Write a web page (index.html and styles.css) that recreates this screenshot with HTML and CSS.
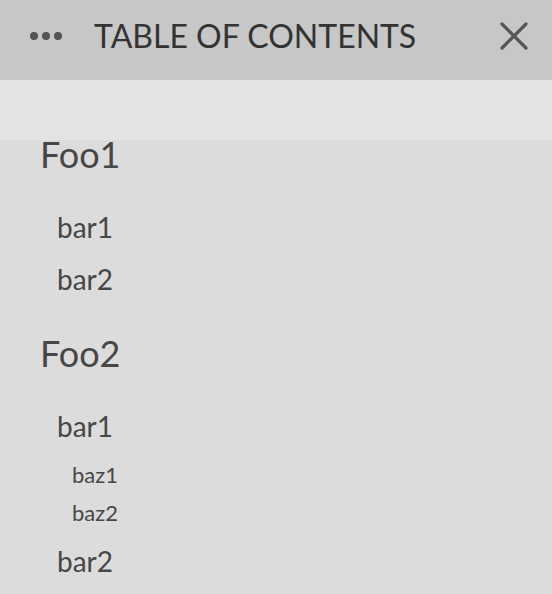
FILE: index.html
```html
<!DOCTYPE html>
<html lang="en">
<head>
    <meta charset="UTF-8">
    <meta name="viewport" content="width=device-width, initial-scale=1.0">
    <title>Table of Contents</title>
    <link rel="stylesheet" href="styles.css">
</head>
<body>
    <header class="toc-header">
        <button class="menu-button" aria-label="More">
            <span class="dot"></span><span class="dot"></span><span class="dot"></span>
        </button>
        <h1>TABLE OF CONTENTS</h1>
        <button class="close-button" aria-label="Close">
            <svg width="28" height="28" viewBox="0 0 28 28">
                <path d="M2 2 L26 26 M26 2 L2 26" stroke="#555" stroke-width="3.2" stroke-linecap="round" fill="none"/>
            </svg>
        </button>
    </header>

    <div class="toc-spacer"></div>

    <nav class="toc">
        <ul class="toc-list">
            <li>
                <a class="toc-h1" href="#">Foo1</a>
                <ul class="toc-sub">
                    <li><a class="toc-h2" href="#">bar1</a></li>
                    <li><a class="toc-h2" href="#">bar2</a></li>
                </ul>
            </li>
            <li>
                <a class="toc-h1" href="#">Foo2</a>
                <ul class="toc-sub">
                    <li>
                        <a class="toc-h2" href="#">bar1</a>
                        <ul class="toc-subsub">
                            <li><a class="toc-h3" href="#">baz1</a></li>
                            <li><a class="toc-h3" href="#">baz2</a></li>
                        </ul>
                    </li>
                    <li><a class="toc-h2" href="#">bar2</a></li>
                </ul>
            </li>
        </ul>
    </nav>
</body>
</html>
```

FILE: styles.css
```css
:root {
    --header-bg: #c7c7c7;
    --spacer-bg: #e3e3e3;
    --background-color: #dcdcdc;
    --title-color: #333;
    --text-color: #474747;
    --icon-color: #555;
}

body {
    font-family: Lato, "Open Sans", sans-serif;
    margin: 0;
    padding: 0;
    background-color: var(--background-color);
    color: var(--text-color);
    height: 594px;
    overflow: hidden;
}

.toc-header {
    box-sizing: border-box;
    height: 80px;
    background-color: var(--header-bg);
    display: flex;
    align-items: center;
    padding: 0 24px 8px 30px;
}

.toc-header h1 {
    margin: 0 0 0 32px;
    flex: 1;
    font-size: 32px;
    font-weight: 400;
    color: var(--title-color);
    line-height: 1;
}

.menu-button,
.close-button {
    background: none;
    border: none;
    padding: 0;
    cursor: pointer;
    display: flex;
    align-items: center;
}

.menu-button {
    gap: 4px;
}

.dot {
    width: 8px;
    height: 8px;
    border-radius: 50%;
    background-color: var(--icon-color);
}

.toc-spacer {
    height: 60px;
    background-color: var(--spacer-bg);
}

.toc ul {
    list-style: none;
    margin: 0;
    padding: 0;
}

.toc a {
    color: var(--text-color);
    text-decoration: none;
    display: block;
}

.toc-list {
    padding-left: 40px !important;
}

.toc-h1 {
    font-size: 36px;
    line-height: 28px;
    margin: 34px 0 33px;
}

.toc-list > li:first-child .toc-h1 {
    margin-top: 0;
}

.toc-sub {
    padding-left: 17px !important;
}

.toc-h2 {
    font-size: 28px;
    line-height: 52px;
}

.toc-subsub {
    padding-left: 15px !important;
    margin: 4px 0 3px !important;
}

.toc-h3 {
    font-size: 22px;
    line-height: 38px;
}
```
